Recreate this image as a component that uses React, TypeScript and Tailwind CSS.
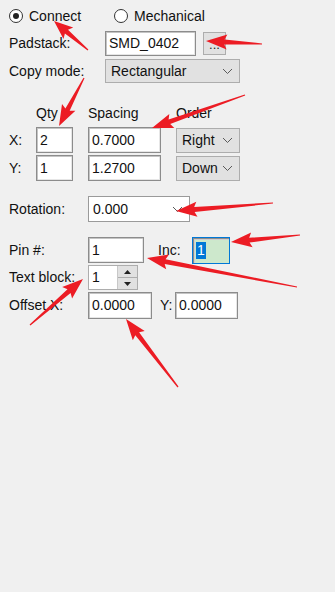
import React from "react";

const font = { fontFamily: '"Liberation Sans", Arial, sans-serif' };

const arrows: [number, number, number, number][] = [
  [88, 50, 54, 21],
  [262, 44, 206, 41],
  [84, 78, 59, 126],
  [245, 95, 152, 128],
  [273, 203, 176, 211],
  [300, 235, 231, 242],
  [297, 287, 147, 258],
  [30, 325, 83, 279],
  [178, 387, 126, 319],
];

function arrowPoints(x1: number, y1: number, x2: number, y2: number) {
  const dx = x2 - x1;
  const dy = y2 - y1;
  const len = Math.hypot(dx, dy);
  const ux = dx / len;
  const uy = dy / len;
  const nx = -uy;
  const ny = ux;
  const h = Math.min(20, len * 0.4);
  const bx = x2 - ux * h;
  const by = y2 - uy * h;
  const p = (x: number, y: number) => `${x.toFixed(1)},${y.toFixed(1)}`;
  return [
    p(x1 + nx * 0.6, y1 + ny * 0.6),
    p(bx + ux * 1.5 + nx * 2.4, by + uy * 1.5 + ny * 2.4),
    p(bx - ux * 1 + nx * 7.5, by - uy * 1 + ny * 7.5),
    p(x2, y2),
    p(bx - ux * 1 - nx * 7.5, by - uy * 1 - ny * 7.5),
    p(bx + ux * 1.5 - nx * 2.4, by + uy * 1.5 - ny * 2.4),
    p(x1 - nx * 0.6, y1 - ny * 0.6),
  ].join(" ");
}

function Chevron() {
  return (
    <svg width="11" height="7" viewBox="0 0 11 7" className="shrink-0">
      <polyline points="1,1 5.5,5.5 10,1" fill="none" stroke="#5a5a5a" strokeWidth="1" />
    </svg>
  );
}

function TextBox({ value, w, h = "h-[26px]" }: { value: string; w: string; h?: string }) {
  return (
    <div
      className={`${w} ${h} flex items-center border border-[#8c8c8c] bg-white pl-[3px] shadow-[inset_1px_1px_0_#c4c4c4,inset_-1px_-1px_0_#e6e6e6] text-[14px] text-[#111]`}
    >
      {value}
    </div>
  );
}

function Combo({ value, w, h = "h-[25px]" }: { value: string; w: string; h?: string }) {
  return (
    <div
      className={`${w} ${h} flex items-center justify-between border border-[#adadad] bg-[#e1e1e1] pl-[5px] pr-[6px] text-[14px] text-[#111]`}
    >
      <span>{value}</span>
      <Chevron />
    </div>
  );
}

function Radio({ checked, label }: { checked?: boolean; label: string }) {
  return (
    <div className="flex items-center gap-[6px]">
      <span className="flex h-[14px] w-[14px] items-center justify-center rounded-full border border-[#333] bg-white">
        {checked && <span className="h-[6px] w-[6px] rounded-full bg-[#222]" />}
      </span>
      <span className="text-[14px] text-[#111]">{label}</span>
    </div>
  );
}

function Label({ children, w }: { children: React.ReactNode; w: string }) {
  return <span className={`${w} shrink-0 text-[14px] text-[#111]`}>{children}</span>;
}

export default function App() {
  return (
    <div className="relative h-[592px] w-[335px] overflow-hidden bg-[#f0f0f0]" style={font}>
      <div className="flex flex-col pl-[9px]">
        <div className="mt-[8px] flex h-[16px] items-center">
          <div className="w-[105px]">
            <Radio checked label="Connect" />
          </div>
          <Radio label="Mechanical" />
        </div>

        <div className="mt-[7px] flex h-[25px] items-center">
          <Label w="w-[96px]">Padstack:</Label>
          <TextBox value="SMD_0402" w="w-[91px]" h="h-[25px]" />
          <button className="ml-[7px] flex h-[23px] w-[23px] items-end justify-center border border-[#adadad] bg-[#e1e1e1] pb-[3px] text-[13px] leading-none text-[#222]">
            ...
          </button>
        </div>

        <div className="mt-[3px] flex h-[24px] items-center">
          <Label w="w-[96px]">Copy mode:</Label>
          <Combo value="Rectangular" w="w-[135px]" h="h-[24px]" />
        </div>

        <div className="mt-[22px] flex h-[16px] items-center text-[14px] text-[#111]">
          <span className="w-[27px]" />
          <span className="w-[52px]">Qty</span>
          <span className="w-[88px]">Spacing</span>
          <span>Order</span>
        </div>

        <div className="mt-[6px] flex h-[26px] items-center">
          <Label w="w-[27px]">X:</Label>
          <TextBox value="2" w="w-[37px]" />
          <div className="ml-[15px]">
            <TextBox value="0.7000" w="w-[73px]" />
          </div>
          <div className="ml-[15px]">
            <Combo value="Right" w="w-[64px]" />
          </div>
        </div>

        <div className="mt-[2px] flex h-[26px] items-center">
          <Label w="w-[27px]">Y:</Label>
          <TextBox value="1" w="w-[37px]" />
          <div className="ml-[15px]">
            <TextBox value="1.2700" w="w-[73px]" />
          </div>
          <div className="ml-[15px]">
            <Combo value="Down" w="w-[64px]" />
          </div>
        </div>

        <div className="mt-[15px] flex h-[26px] items-center">
          <Label w="w-[79px]">Rotation:</Label>
          <div className="flex h-[26px] w-[102px] items-center justify-between border border-[#9a9a9a] bg-white pl-[4px] pr-[6px] text-[14px] text-[#111]">
            <span>0.000</span>
            <Chevron />
          </div>
        </div>

        <div className="mt-[15px] flex h-[26px] items-center">
          <Label w="w-[79px]">Pin #:</Label>
          <TextBox value="1" w="w-[56px]" />
          <span className="ml-[14px] w-[34px] text-[14px] text-[#111]">Inc:</span>
          <div className="flex h-[27px] w-[38px] items-center border border-[#0078d7] bg-[#cde8cc] pl-[3px] shadow-[inset_1px_1px_0_#8c8c8c,inset_2px_2px_0_#cfcfcf]">
            <span className="flex h-[17px] items-center bg-[#0078d7] px-[1px] text-[14px] text-white">1</span>
          </div>
        </div>

        <div className="mt-[2px] flex h-[25px] items-center">
          <Label w="w-[79px]">Text block:</Label>
          <div className="flex h-[25px] w-[50px] border border-[#adadad] bg-white">
            <div className="flex flex-1 items-center border-r border-[#c8c8c8] pl-[3px] text-[14px] text-[#111]">1</div>
            <div className="flex w-[19px] flex-col">
              <div className="flex flex-1 items-center justify-center border-b border-[#adadad] bg-[#e1e1e1]">
                <svg width="7" height="4" viewBox="0 0 7 4">
                  <polygon points="0,4 3.5,0 7,4" fill="#222" />
                </svg>
              </div>
              <div className="flex flex-1 items-center justify-center bg-[#e1e1e1]">
                <svg width="7" height="4" viewBox="0 0 7 4">
                  <polygon points="0,0 3.5,4 7,0" fill="#222" />
                </svg>
              </div>
            </div>
          </div>
        </div>

        <div className="mt-[2px] flex h-[27px] items-center">
          <Label w="w-[79px]">Offset X:</Label>
          <TextBox value="0.0000" w="w-[64px]" h="h-[27px]" />
          <span className="ml-[8px] w-[15px] text-[14px] text-[#111]">Y:</span>
          <TextBox value="0.0000" w="w-[63px]" h="h-[27px]" />
        </div>
      </div>

      <svg className="pointer-events-none absolute inset-0" width="335" height="592">
        {arrows.map(([x1, y1, x2, y2], i) => (
          <polygon key={i} points={arrowPoints(x1, y1, x2, y2)} fill="#ec1c24" />
        ))}
      </svg>
    </div>
  );
}
